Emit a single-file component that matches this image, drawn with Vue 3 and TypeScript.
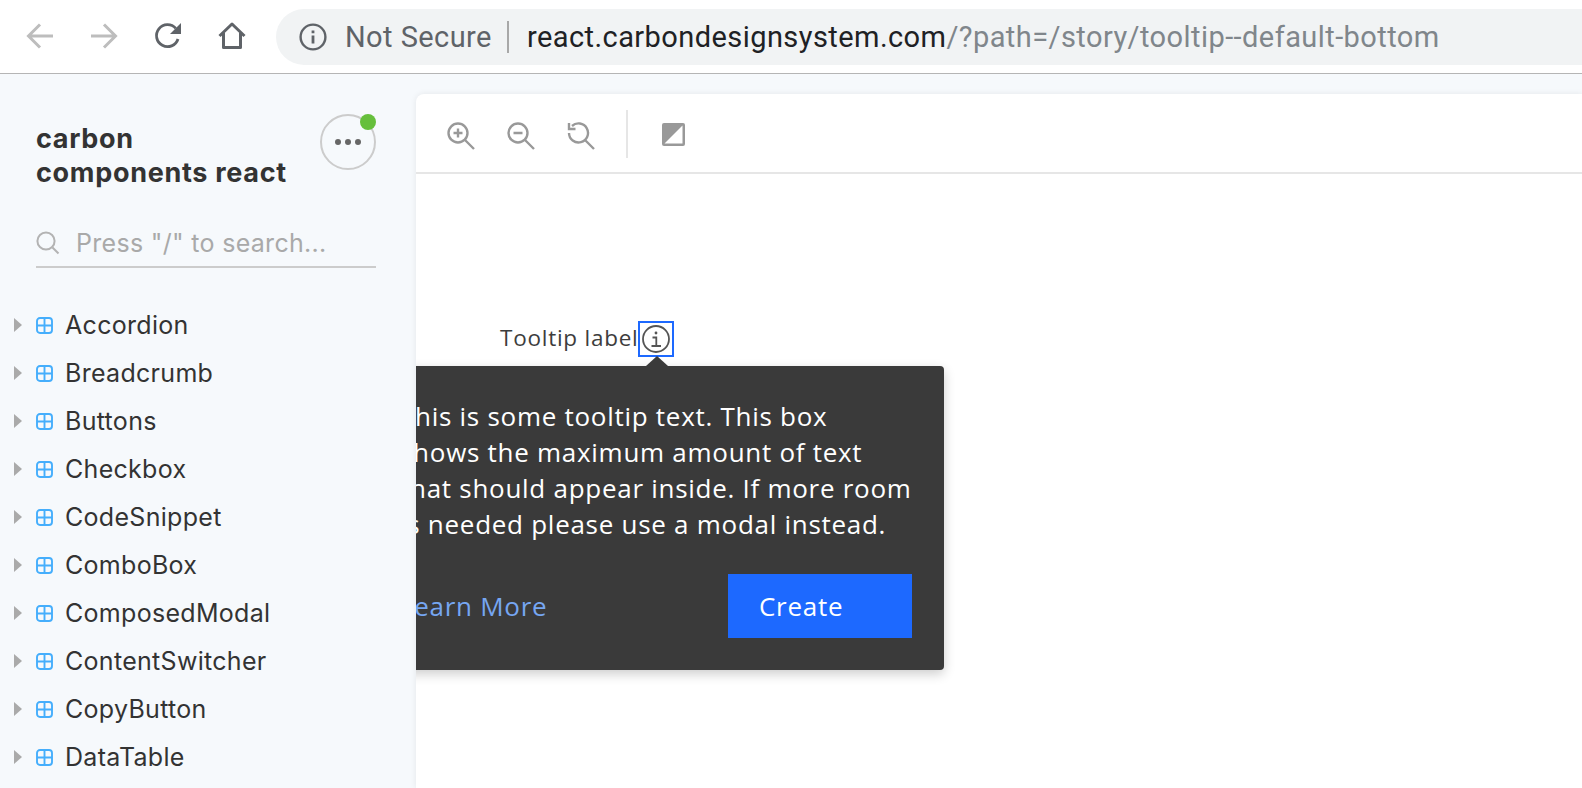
<script setup lang="ts">
const items: string[] = ['Accordion','Breadcrumb','Buttons','Checkbox','CodeSnippet','ComboBox','ComposedModal','ContentSwitcher','CopyButton','DataTable'];
const lines: string[] = ['This is some tooltip text. This box','shows the maximum amount of text','that should appear inside. If more room','is needed please use a modal instead.'];
</script>

<template>
  <div class="app">
    <header class="topbar">
      <svg class="nav first" width="28" height="28" viewBox="0 0 28 28" fill="none" stroke="#bdbdbd" stroke-width="3"><path d="M27 14H3M14 2.500 2.500 14 14 25.500"/></svg>
      <svg class="nav" width="28" height="28" viewBox="0 0 28 28" fill="none" stroke="#bdbdbd" stroke-width="3"><path d="M1 14h24M14 2.500 25.500 14 14 25.500"/></svg>
      <svg class="nav" width="28" height="28" viewBox="0 0 28 28" fill="none"><path d="M24 17a11 11 0 1 1-2.200-10.600" stroke="#5f6368" stroke-width="2.800"/><path d="M27 1v11H16z" fill="#5f6368"/></svg>
      <svg class="nav" width="28" height="28" viewBox="0 0 28 28" fill="none" stroke="#5f6368" stroke-width="3" stroke-linejoin="round"><path d="M1.500 14 14 2l12.500 12M5.500 11v14.500h17V11"/></svg>
      <div class="pill">
        <svg width="28" height="28" viewBox="0 0 28 28" fill="none"><circle cx="14" cy="14" r="12.400" stroke="#5f6368" stroke-width="2.400"/><path d="M12.600 7.500h2.800v2.800h-2.800zM12.600 12.600h2.800v8h-2.800z" fill="#5f6368"/></svg>
        <span class="secure">Not Secure</span>
        <span class="sep"></span>
        <span class="url"><span class="host">react.carbondesignsystem.com</span>/?path=/story/tooltip--default-bottom</span>
      </div>
    </header>
    <div class="body">
      <aside class="side">
        <div class="brand">
          <div class="title">carbon<br />components react</div>
          <div class="menu">
            <svg width="26" height="6" viewBox="0 0 26 6" fill="#666"><circle cx="3" cy="3" r="3"/><circle cx="13" cy="3" r="3"/><circle cx="23" cy="3" r="3"/></svg>
            <span class="dot"></span>
          </div>
        </div>
        <div class="search">
          <svg width="24" height="24" viewBox="0 0 24 24" fill="none" stroke="#b3b3b3" stroke-width="2"><circle cx="10" cy="10" r="8.600"/><path d="m16.500 16.500 6 6"/></svg>
          <span>Press "/" to search...</span>
        </div>
        <ul class="tree">
          <li v-for="item in items" :key="item">
            <span class="caret"></span>
            <svg width="17" height="17" viewBox="0 0 17 17" fill="none" stroke="#45aefc" stroke-width="1.900"><rect x="1" y="1" width="15" height="15" rx="3"/><path d="M8.500 1v15M1 8.500h15"/></svg>
            <span class="name">{{ item }}</span>
          </li>
        </ul>
      </aside>
      <main class="panel">
        <div class="toolbar">
          <svg width="28" height="28" viewBox="0 0 28 28" class="tool first" fill="none" stroke="#999" stroke-width="2.400"><circle cx="11" cy="11" r="9.500"/><path d="m18 18 9 9M11 6.500v9M6.500 11h9"/></svg>
          <svg width="28" height="28" viewBox="0 0 28 28" class="tool" fill="none" stroke="#999" stroke-width="2.400"><circle cx="11" cy="11" r="9.500"/><path d="m18 18 9 9M6.500 11h9"/></svg>
          <svg width="28" height="28" viewBox="0 0 28 28" class="tool" fill="none" stroke="#999" stroke-width="2.400"><path d="M5 4A9.500 9.500 0 1 1 2 11M2 1v6h6.500M18 18l9 9"/></svg>
          <span class="vr"></span>
          <svg width="23" height="23" viewBox="0 0 23 23" class="contrast"><rect width="23" height="23" rx="2" fill="#999"/><path d="M20.500 2.500v18H2.500z" fill="#fff"/></svg>
        </div>
        <div class="stage">
          <div class="label-row">
            <span class="label">Tooltip label</span>
            <span class="trigger">
              <svg width="28" height="28" viewBox="0 0 28 28" fill="none" stroke="#555" stroke-width="1.800"><circle cx="14" cy="14" r="13"/><path d="M10.500 12.500h3.800v8.500M9.500 21h9.500"/><circle cx="14" cy="8" r="1.400" fill="#555" stroke="none"/></svg>
            </span>
          </div>
          <div class="tip">
            <span class="arrow"></span>
            <p v-for="line in lines" :key="line">{{ line }}</p>
            <div class="tip-foot">
              <span class="more">Learn More</span>
              <span class="create">Create</span>
            </div>
          </div>
        </div>
      </main>
    </div>
  </div>
</template>

<style>
html, body { margin: 0; overflow: hidden; background: #fff; }
</style>

<style scoped>
.app { width: 1582px; height: 788px; overflow: hidden; display: flex; flex-direction: column; font-family: "Open Sans", sans-serif; }
.topbar { height: 73px; flex: none; display: flex; align-items: center; border-bottom: 1px solid #b5b5b5; background: #fff; box-sizing: content-box; }
.nav { flex: none; margin-left: 36px; margin-top: -1px; }
.nav.first { margin-left: 26px; }
.pill { flex: none; margin-left: 30px; width: 1400px; height: 56px; border-radius: 28px; background: #f1f3f4; display: flex; align-items: center; padding-left: 23px; box-sizing: border-box; font-family: Roboto, sans-serif; font-size: 29px; letter-spacing: .43px; color: #5f6368; white-space: nowrap; }
.secure { margin-left: 18px; }
.sep { width: 2px; height: 32px; background: #a8a8a8; margin: 0 18px 0 15px; }
.url { color: #80868b; }
.host { color: #202124; }
.body { flex: 1; display: flex; min-height: 0; background: #f6f9fc; }
.side { width: 416px; flex: none; padding: 0 0 0 36px; box-sizing: border-box; font-family: Inter, sans-serif; }
.brand { display: flex; justify-content: space-between; width: 340px; padding-top: 40px; box-sizing: border-box; }
.title { font-weight: 700; font-size: 27px; letter-spacing: .7px; line-height: 34px; color: #333; padding-top: 8px; white-space: nowrap; }
.menu { position: relative; width: 56px; height: 56px; border: 2px solid #ccc; border-radius: 50%; box-sizing: border-box; display: flex; align-items: center; justify-content: center; }
.dot { position: absolute; right: -2px; top: -2px; width: 16px; height: 16px; border-radius: 50%; background: #66bf3c; }
.search { width: 340px; margin-top: 30px; height: 46px; border-bottom: 2px solid #ccc; display: flex; align-items: center; gap: 16px; box-sizing: content-box; font-size: 25px; letter-spacing: .3px; color: #a9a9a9; white-space: nowrap; }
.tree { list-style: none; margin: 33px 0 0 -22px; padding: 0; }
.tree li { height: 48px; display: flex; align-items: center; white-space: nowrap; }
.caret { width: 0; height: 0; border-left: 8px solid #aaa; border-top: 7px solid transparent; border-bottom: 7px solid transparent; margin-right: 14px; }
.name { margin-left: 12px; font-size: 25px; letter-spacing: .3px; color: #333; }
.panel { flex: 1; margin-top: 20px; background: #fff; border-top-left-radius: 8px; overflow: hidden; box-shadow: 0 0 6px rgba(0, 0, 0, .08); min-width: 0; display: flex; flex-direction: column; position: relative; }
.toolbar { height: 78px; flex: none; border-bottom: 2px solid #e6e6e6; display: flex; align-items: center; }
.tool { margin-left: 32px; margin-top: 6px; }
.tool.first { margin-left: 31px; }
.vr { width: 2px; height: 48px; background: #e6e6e6; margin: 2px 34px 0 31px; }
.contrast { margin-top: 2px; }
.stage { flex: 1; position: relative; padding: 147px 0 0 84px; }
.label-row { display: flex; align-items: center; height: 36px; }
.label { font-size: 22.500px; color: #3d3d3d; letter-spacing: .75px; padding-bottom: 4px; }
.trigger { width: 36px; height: 36px; border: 2px solid #1d69ff; box-sizing: border-box; display: flex; align-items: center; justify-content: center; margin-left: 0; }
.tip { position: absolute; left: -48px; top: 192px; width: 576px; height: 304px; box-sizing: border-box; padding: 32px; background: #3a3a3a; border-radius: 4px; box-shadow: 0 4px 12px rgba(0, 0, 0, .2); color: #fff; font-size: 26px; letter-spacing: .72px; }
.tip p { margin: 0; line-height: 36px; white-space: nowrap; }
.arrow { position: absolute; left: 278px; top: -10px; width: 0; height: 0; border: 11px solid transparent; border-top: 0; border-bottom: 10px solid #3a3a3a; }
.tip-foot { display: flex; justify-content: space-between; align-items: center; margin-top: 32px; }
.more { color: #76a6f2; }
.create { width: 184px; height: 64px; background: #1d69ff; box-sizing: border-box; padding-left: 31px; display: flex; align-items: center; }
</style>
